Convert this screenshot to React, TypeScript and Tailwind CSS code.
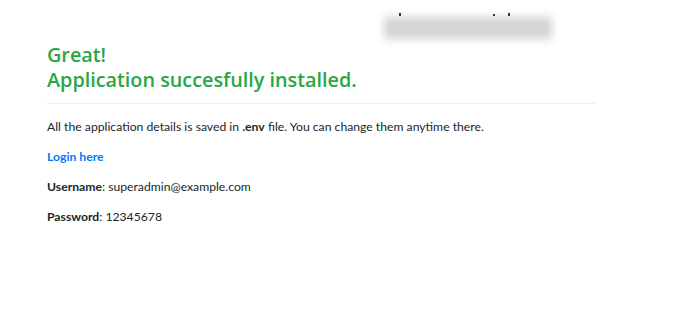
export default function App() {
  return (
    <div className="relative h-[314px] w-[700px] overflow-hidden bg-white font-['Open_Sans',sans-serif] text-[#212529]">
      {/* blurred header bit */}
      <div className="absolute left-[384px] top-[17px] h-[22px] w-[168px] bg-[#d4d4d4] blur-[4px]" />
      <div className="absolute left-[399px] top-[13px] h-[3px] w-[2px] bg-[#334]" />
      <div className="absolute left-[493px] top-[14px] h-[2px] w-[2px] bg-[#334]" />
      <div className="absolute left-[508px] top-[13px] h-[3px] w-[2px] bg-[#334]" />

      <div className="flex w-[595px] flex-col pl-[47px] pt-[42px]">
        <h3 className="text-[19.8px] leading-[25px] font-semibold text-[#28a745]">
          Great!
          <br />
          Application succesfully installed.
        </h3>
        <hr className="mt-[11px] border-t border-[#eeeeee]" />
        <div className="mt-[14px] flex flex-col gap-[12px] font-['Lato',sans-serif] text-[12.2px] leading-[18px]">
          <p>
            All the application details is saved in <b>.env</b> file. You can change them anytime there.
          </p>
          <p>
            <a href="#" className="font-bold text-[#007bff]">Login here</a>
          </p>
          <p>
            <b>Username</b>: superadmin@example.com
          </p>
          <p>
            <b>Password</b>: 12345678
          </p>
        </div>
      </div>
    </div>
  )
}
